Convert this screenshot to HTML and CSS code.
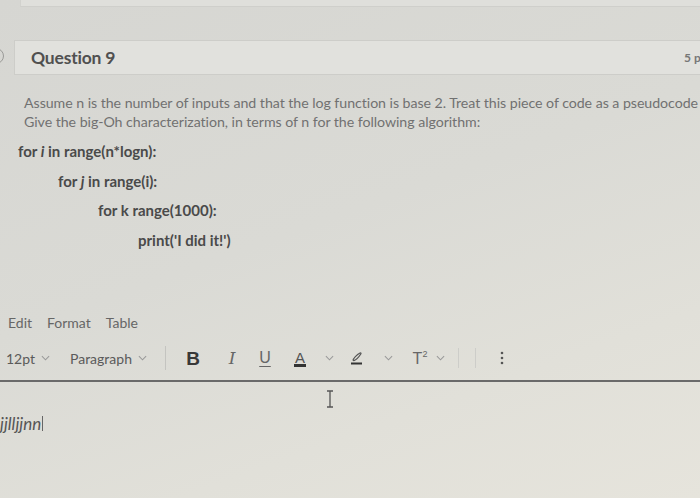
FILE: index.html
```html
<!DOCTYPE html>
<html>
<head>
<meta charset="utf-8">
<link rel="stylesheet" href="styles.css">
</head>
<body>
<div class="page">
  <div class="prev-card"></div>
  <div class="q-row">
    <div class="flag"></div>
    <div class="q-header">
      <span class="q-title">Question 9</span>
      <span class="q-points">5 p</span>
    </div>
  </div>
  <div class="q-body">
    <p class="prompt">Assume n is the number of inputs and that the log function is base 2. Treat this piece of code as a pseudocode<br>Give the big-Oh characterization, in terms of n for the following algorithm:</p>
    <p class="code c1">for <i>i</i> in range(n*logn):</p>
    <p class="code c2">for <i>j</i> in range(i):</p>
    <p class="code c3">for k range(1000):</p>
    <p class="code c4">print('I did it!')</p>
  </div>
  <div class="editor">
    <div class="menubar">
      <span>Edit</span><span>Format</span><span>Table</span>
    </div>
    <div class="toolbar">
      <span class="tb-drop size">12pt <svg class="chev" viewBox="0 0 10 6"><path d="M1 1l4 4 4-4"/></svg></span>
      <span class="tb-drop para">Paragraph <svg class="chev" viewBox="0 0 10 6"><path d="M1 1l4 4 4-4"/></svg></span>
      <span class="sep s1"></span>
      <span class="btn bold">B</span>
      <span class="btn ital">I</span>
      <span class="btn und">U</span>
      <span class="btn col"><span class="col-a">A</span></span>
      <svg class="chev ch1" viewBox="0 0 10 6"><path d="M1 1l4 4 4-4"/></svg>
      <svg class="pen" viewBox="0 0 14 14"><path d="M3 9.5c0-2 4-6 7-7.5 1-.4 1.3.2.8 1C9.5 5 6 9 4 9.6M3 9.5l1 .1"/><rect x="1" y="11.5" width="11" height="2"/></svg>
      <svg class="chev ch2" viewBox="0 0 10 6"><path d="M1 1l4 4 4-4"/></svg>
      <span class="btn sup">T<sup>2</sup></span>
      <svg class="chev ch3" viewBox="0 0 10 6"><path d="M1 1l4 4 4-4"/></svg>
      <span class="sep s2"></span>
      <span class="sep s3"></span>
      <svg class="kebab" viewBox="0 0 4 14"><circle cx="2" cy="2" r="1.3"/><circle cx="2" cy="7" r="1.3"/><circle cx="2" cy="12" r="1.3"/></svg>
    </div>
    <div class="edit-area">
      <svg class="ibeam" viewBox="0 0 10 18"><path d="M2 1h6M5 1v16M2 17h6"/></svg>
      <p class="typed">jjlljjnn<span class="caret"></span></p>
    </div>
  </div>
</div>
</body>
</html>
```
FILE: styles.css
```css
html, body {
  margin: 0;
  padding: 0;
}
body {
  width: 700px;
  height: 498px;
  overflow: hidden;
  font-family: Lato, "Open Sans", sans-serif;
  background: linear-gradient(160deg, #d6d6d2 0%, #dadad5 45%, #e1e0d9 75%, #e6e4dc 100%);
  color: #666;
}
.page {
  display: flex;
  flex-direction: column;
}
.prev-card {
  margin-left: 20px;
  height: 6px;
  background: #dfdfdb;
  border-bottom: 1px solid #cfcfcb;
  border-left: 1px solid #d2d2ce;
}
.q-row {
  display: flex;
  margin-top: 33px;
  position: relative;
}
.flag {
  position: absolute;
  left: -12px;
  top: 8px;
  width: 14px;
  height: 14px;
  border: 1.5px solid #9a9a98;
  border-radius: 50%;
}
.q-header {
  flex: 1;
  margin-left: 14px;
  height: 35px;
  background: #e1e1dd;
  border-top: 1px solid #cdcdc9;
  border-bottom: 1px solid #cdcdc9;
  border-left: 1px solid #cdcdc9;
  display: flex;
  align-items: center;
  justify-content: space-between;
  padding-left: 16px;
  box-sizing: border-box;
}
.q-title {
  font-weight: 700;
  font-size: 17.5px;
  color: #505050;
  letter-spacing: -0.2px;
}
.q-points {
  font-size: 12px;
  color: #777;
  font-weight: 700;
  white-space: nowrap;
  width: 16px;
  overflow: visible;
}
.q-body {
  padding-top: 18px;
  height: 236px;
  box-sizing: border-box;
}
.prompt {
  margin: 0 0 0 24px;
  font-size: 14.2px;
  line-height: 19px;
  color: #717171;
  white-space: nowrap;
  letter-spacing: -0.05px;
}
.code {
  margin: 0;
  font-size: 15px;
  font-weight: 700;
  color: #4a4a4a;
  line-height: 16px;
}
.code i { font-style: italic; }
.c1 { margin: 12px 0 0 18px; }
.c2 { margin: 14px 0 0 58px; }
.c3 { margin: 13px 0 0 98px; }
.c4 { margin: 14px 0 0 138px; }

.editor {
  display: flex;
  flex-direction: column;
}
.menubar {
  display: flex;
  gap: 15px;
  padding-left: 8px;
  height: 22px;
  align-items: center;
  font-size: 14px;
  color: #666;
}
.toolbar {
  margin-top: 9px;
  display: flex;
  align-items: center;
  padding-left: 6px;
  border-bottom: 2px solid #6a6a6a;
  box-sizing: border-box;
  padding-bottom: 6px;
  height: 40px;
}
.tb-drop {
  font-size: 14px;
  color: #5a5a5a;
  display: flex;
  align-items: center;
  gap: 6px;
}
.size { width: 58px; }
.para { width: 82px; margin-left: 6px; }
.chev {
  width: 9px;
  height: 6px;
  fill: none;
  stroke: #9a9a9a;
  stroke-width: 1.2;
  flex: none;
}
.ch1 { margin-left: 15px; }
.ch2 { margin-left: 20px; }
.ch3 { margin-left: 5px; }
.sep {
  width: 1px;
  height: 24px;
  background: #c4c4c0;
  flex: none;
}
.s1 { margin-left: 13px; }
.s2 { margin-left: 13px; background: #cdcdc9; height: 20px; }
.s3 { margin-left: 16px; background: #cdcdc9; height: 20px; }
.btn {
  width: 20px;
  text-align: center;
  line-height: 1;
  flex: none;
}
.bold { font-weight: 700; font-family: "Liberation Sans", Arial, sans-serif; font-size: 19px; color: #383838; margin-left: 17px; }
.ital { font-family: "DejaVu Serif", serif; font-style: italic; color: #666; margin-left: 19px; font-size: 17px; }
.und { text-decoration: underline; text-decoration-thickness: 1px; text-underline-offset: 3px; color: #666; margin-left: 13px; font-size: 16px; font-family: "Liberation Sans", sans-serif; }
.col { margin-left: 15px; font-size: 15px; font-family: "Liberation Sans", sans-serif; color: #555; }
.col-a { display: inline-block; border-bottom: 3px solid #333; line-height: 13px; padding: 0 1px; }
.pen {
  width: 14px;
  height: 14px;
  margin-left: 16px;
  fill: none;
  stroke: #555;
  stroke-width: 1.2;
  flex: none;
}
.pen rect { fill: #333; stroke: none; }
.sup {
  width: 22px;
  margin-left: 16px;
  font-family: "Liberation Sans", sans-serif;
  font-size: 16px;
  color: #666;
}
.sup sup { font-size: 9px; vertical-align: 7px; }
.kebab {
  width: 4px;
  height: 14px;
  fill: #555;
  margin-left: 24px;
  flex: none;
}
.edit-area {
  position: relative;
  height: 130px;
}
.ibeam {
  position: absolute;
  left: 325px;
  top: 8px;
  width: 10px;
  height: 18px;
  fill: none;
  stroke: #555;
  stroke-width: 1.3;
}
.typed {
  margin: 31px 0 0 0;
  font-size: 17px;
  font-style: italic;
  color: #555;
  display: flex;
  align-items: center;
}
.caret {
  display: inline-block;
  width: 1px;
  height: 15px;
  background: #666;
  margin-left: 1px;
}
```
